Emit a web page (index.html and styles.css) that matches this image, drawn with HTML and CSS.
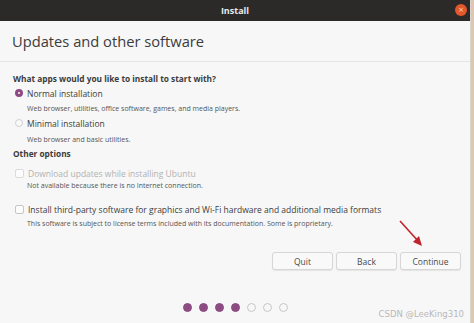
FILE: index.html
```html
<!DOCTYPE html>
<html lang="en">

<head>
    <meta charset="UTF-8">
    <meta name="viewport" content="width=device-width, initial-scale=1.0">
    <title>Install</title>
    <link rel="stylesheet" href="styles.css">
</head>

<body>
    <div class="window">
        <div class="titlebar">
            <span class="title">Install</span>
            <span class="close">&#215;</span>
        </div>

        <div class="header">
            <h1>Updates and other software</h1>
        </div>

        <div class="content">
            <h2>What apps would you like to install to start with?</h2>

            <div class="option normal">
                <span class="radio checked"></span>
                <span class="label">Normal installation</span>
            </div>
            <p class="desc d1">Web browser, utilities, office software, games, and media players.</p>

            <div class="option minimal">
                <span class="radio"></span>
                <span class="label">Minimal installation</span>
            </div>
            <p class="desc d2">Web browser and basic utilities.</p>

            <h2 class="other">Other options</h2>

            <div class="option disabled">
                <span class="check"></span>
                <span class="label">Download updates while installing Ubuntu</span>
            </div>
            <p class="desc d3">Not available because there is no Internet connection.</p>

            <div class="option third">
                <span class="check"></span>
                <span class="label">Install third-party software for graphics and Wi-Fi hardware and additional media formats</span>
            </div>
            <p class="desc d4">This software is subject to license terms included with its documentation. Some is proprietary.</p>
        </div>

        <div class="buttons">
            <button class="btn">Quit</button>
            <button class="btn">Back</button>
            <button class="btn">Continue</button>
        </div>

        <div class="dots">
            <span class="dot on"></span>
            <span class="dot on"></span>
            <span class="dot on"></span>
            <span class="dot on"></span>
            <span class="dot"></span>
            <span class="dot"></span>
            <span class="dot"></span>
        </div>

        <!-- red arrow pointing at Continue -->
        <svg class="arrow" width="30" height="30" viewBox="0 0 30 30">
            <line x1="2" y1="1" x2="21" y2="22" stroke="#c0232b" stroke-width="1.6"/>
            <polygon points="24,26 15,22 21,16" fill="#c0232b"/>
        </svg>

        <div class="watermark">CSDN @LeeKing310</div>
    </div>
</body>

</html>
```

FILE: styles.css
```css
html, body {
    margin: 0;
    height: 100%;
}

body {
    background: #e0c6ac;
    font-family: "Open Sans", "DejaVu Sans", sans-serif;
}

.window {
    position: relative;
    width: 470px;
    height: 100%;
    background: #f7f7f7;
    border-right: 1px solid #d8d4d0;
    display: flex;
    flex-direction: column;
}

.titlebar {
    height: 21px;
    background: #2c2a29;
    display: flex;
    align-items: center;
    justify-content: center;
    position: relative;
}

.title {
    color: #e8e8e8;
    font-size: 9px;
    font-weight: bold;
}

.close {
    position: absolute;
    right: 3px;
    top: 4px;
    width: 12px;
    height: 12px;
    border-radius: 50%;
    background: #e2572b;
    color: #f6c7b2;
    font-size: 9px;
    line-height: 12px;
    text-align: center;
}

.header {
    height: 40px;
    border-bottom: 1px solid #e4e4e4;
    display: flex;
    align-items: center;
    padding-left: 12px;
}

h1 {
    margin: 0;
    font-size: 14.7px;
    font-weight: normal;
    color: #3c3c3c;
}

.content {
    padding: 11px 13px 0;
    color: #3c3c3c;
}

h2 {
    margin: 0;
    height: 12px;
    line-height: 12px;
    font-size: 8.3px;
    font-weight: bold;
}

h2.other {
    margin-top: 2px;
}

.option {
    display: flex;
    align-items: center;
    gap: 4px;
    height: 12px;
    padding-left: 2px;
    font-size: 8.5px;
}

.option.normal,
.option.minimal {
    margin-top: 2px;
}

.option.disabled {
    color: #b2b2b2;
    margin-top: 7px;
}

.option.third {
    margin-top: 11px;
}

.radio {
    width: 8px;
    height: 8px;
    border-radius: 50%;
    border: 1px solid #cfcfcf;
    background: #fbfbfb;
    box-sizing: border-box;
}

.radio.checked {
    border: 3px solid #8d4b82;
    background: #fff;
}

.check {
    width: 9px;
    height: 9px;
    border: 1px solid #c6c6c6;
    border-radius: 2px;
    background: #fcfcfc;
    box-sizing: border-box;
}

.disabled .check {
    border-color: #dcdcdc;
}

.desc {
    margin: 0 0 0 14px;
    height: 12px;
    line-height: 12px;
    font-size: 7px;
    color: #555;
}

.d1 { margin-top: 4px; }
.d2 { margin-top: 5px; }
.d3 { margin-top: 1px; }
.d4 { margin-top: 3px; }

.buttons {
    display: flex;
    justify-content: flex-end;
    gap: 3px;
    margin: 22px 9px 0 0;
}

.btn {
    width: 61px;
    height: 18px;
    border: 1px solid #d6d6d6;
    border-radius: 3px;
    background: #f9f9f9;
    color: #4a4a4a;
    font-family: inherit;
    font-size: 8.5px;
    padding: 0;
    box-shadow: 0 1px 1px #e4e4e4;
}

.dots {
    display: flex;
    justify-content: center;
    gap: 7px;
    margin-top: 33px;
}

.dot {
    width: 9px;
    height: 9px;
    border-radius: 50%;
    border: 1px solid #c6c6c6;
    box-sizing: border-box;
}

.dot.on {
    background: #8d4b82;
    border-color: #8d4b82;
}

.arrow {
    position: absolute;
    left: 398px;
    top: 220px;
}

.watermark {
    position: absolute;
    right: 6px;
    bottom: 4px;
    font-family: "DejaVu Sans", sans-serif;
    font-size: 8.5px;
    color: #b9b9b9;
}
```
